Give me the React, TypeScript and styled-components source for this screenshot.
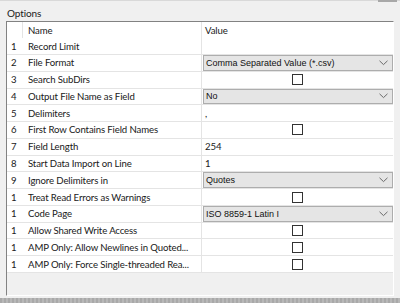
import React from "react";
import styled, { createGlobalStyle } from "styled-components";

const Global = createGlobalStyle`
  html, body { margin: 0; padding: 0; background: #f0f0f0; }
  body { font-family: Lato, "Noto Sans", sans-serif; font-size: 9.6px; letter-spacing: -0.12px; color: #202020; }
`;

const Page = styled.div`
  width: 400px;
  height: 303px;
  display: flex;
  flex-direction: column;
  background: #f0f0f0;
  overflow: hidden;
`;

const TopStrip = styled.div`
  height: 2px;
  border-top: 1px solid #d9d9d9;
  box-sizing: border-box;
  display: flex;
  justify-content: flex-end;
  padding-right: 3px;
`;

const TopKnob = styled.div`
  width: 19px;
  height: 2px;
  margin-top: -1px;
  background: #a8a8a8;
`;

const Title = styled.div`
  height: 19px;
  padding-left: 7px;
  line-height: 22px;
  font-size: 10px;
  box-sizing: border-box;
`;

const Box = styled.div`
  margin: 0 6px;
  height: 275px;
  box-sizing: border-box;
  border-style: solid;
  border-width: 1px;
  border-color: #828282 #ffffff #ffffff #828282;
  background: #f0f0f0;
  display: flex;
  flex-direction: column;
`;

const Rows = styled.div`
  background: #ffffff;
  display: flex;
  flex-direction: column;
`;

const HeaderBlock = styled.div`
  display: flex;
  height: 33px;
`;

const LeftStack = styled.div`
  display: flex;
  flex-direction: column;
  width: 194px;
  flex: none;
`;

const Row = styled.div<{ $h?: string }>`
  display: flex;
  height: ${(p) => p.$h ?? "16.77px"};
  flex: none;
`;

const Cell = styled.div<{ $line?: boolean; $right?: boolean; $left?: boolean }>`
  box-sizing: border-box;
  display: flex;
  align-items: center;
  white-space: nowrap;
  overflow: hidden;
  min-width: 0;
  border-bottom: ${(p) => (p.$line ? "1px solid #e4e4e4" : "none")};
  border-right: ${(p) => (p.$right ? "1px solid #e4e4e4" : "none")};
  border-left: ${(p) => (p.$left ? "1px solid #e4e4e4" : "none")};
`;

const NumCell = styled(Cell)`
  width: 16px;
  flex: none;
  padding-left: 4px;
`;

const NameCell = styled(Cell)`
  width: 178px;
  flex: none;
  padding-left: 5px;
`;

const ValueCell = styled(Cell)<{ $center?: boolean; $top?: boolean }>`
  flex: 1;
  padding: 0 0 0 3px;
  justify-content: ${(p) => (p.$center ? "center" : "flex-start")};
  align-items: ${(p) => (p.$top ? "flex-start" : "center")};
`;

const ValueHeadText = styled.span`
  line-height: 17px;
`;

const Combo = styled.div`
  flex: 1;
  align-self: stretch;
  margin: 0 0 0 -2px;
  box-sizing: border-box;
  background: #e5e5e5;
  border: 1px solid #adadad;
  display: flex;
  align-items: center;
  justify-content: space-between;
  padding: 0 4px 0 2px;
  font-family: "Liberation Sans", Arial, sans-serif;
  font-size: 9px;
  letter-spacing: 0;
  color: #111111;
`;

const Check = styled.div`
  width: 11px;
  height: 11px;
  box-sizing: border-box;
  border: 1px solid #333333;
  background: #ffffff;
  margin-left: -3px;
`;

const BottomBar = styled.div`
  margin-top: auto;
  height: 5px;
  background: repeating-linear-gradient(90deg, #a9a9a9 0 2px, #b8b8b8 2px 4px);
`;

const Chevron = () => (
  <svg width="9" height="6" viewBox="0 0 9 6">
    <polyline points="0.5,0.8 4.5,4.6 8.5,0.8" fill="none" stroke="#6a6a6a" strokeWidth="1" />
  </svg>
);

type Kind =
  | { t: "combo"; v: string }
  | { t: "check" }
  | { t: "text"; v: string };

const rows: { n: string; name: string; kind: Kind }[] = [
  { n: "2", name: "File Format", kind: { t: "combo", v: "Comma Separated Value (*.csv)" } },
  { n: "3", name: "Search SubDirs", kind: { t: "check" } },
  { n: "4", name: "Output File Name as Field", kind: { t: "combo", v: "No" } },
  { n: "5", name: "Delimiters", kind: { t: "text", v: "," } },
  { n: "6", name: "First Row Contains Field Names", kind: { t: "check" } },
  { n: "7", name: "Field Length", kind: { t: "text", v: "254" } },
  { n: "8", name: "Start Data Import on Line", kind: { t: "text", v: "1" } },
  { n: "9", name: "Ignore Delimiters in", kind: { t: "combo", v: "Quotes" } },
  { n: "1", name: "Treat Read Errors as Warnings", kind: { t: "check" } },
  { n: "1", name: "Code Page", kind: { t: "combo", v: "ISO 8859-1 Latin I" } },
  { n: "1", name: "Allow Shared Write Access", kind: { t: "check" } },
  { n: "1", name: "AMP Only: Allow Newlines in Quoted...", kind: { t: "check" } },
  { n: "1", name: "AMP Only: Force Single-threaded Rea...", kind: { t: "check" } },
];

function Value({ kind }: { kind: Kind }) {
  if (kind.t === "combo")
    return (
      <ValueCell $line $left>
        <Combo>
          <span>{kind.v}</span>
          <Chevron />
        </Combo>
      </ValueCell>
    );
  if (kind.t === "check")
    return (
      <ValueCell $line $left $center>
        <Check />
      </ValueCell>
    );
  return (
    <ValueCell $line $left>
      {kind.v}
    </ValueCell>
  );
}

export default function App() {
  return (
    <Page>
      <Global />
      <TopStrip>
        <TopKnob />
      </TopStrip>
      <Title>Options</Title>
      <Box>
        <Rows>
          <HeaderBlock>
            <LeftStack>
              <Row $h="16px">
                <NumCell $right />
                <NameCell>Name</NameCell>
              </Row>
              <Row $h="17px">
                <NumCell $line>1</NumCell>
                <NameCell $line>Record Limit</NameCell>
              </Row>
            </LeftStack>
            <ValueCell $left $line $top>
              <ValueHeadText>Value</ValueHeadText>
            </ValueCell>
          </HeaderBlock>
          {rows.map((r, i) => (
            <Row key={i}>
              <NumCell $line>{r.n}</NumCell>
              <NameCell $line>{r.name}</NameCell>
              <Value kind={r.kind} />
            </Row>
          ))}
        </Rows>
      </Box>
      <BottomBar />
    </Page>
  );
}
